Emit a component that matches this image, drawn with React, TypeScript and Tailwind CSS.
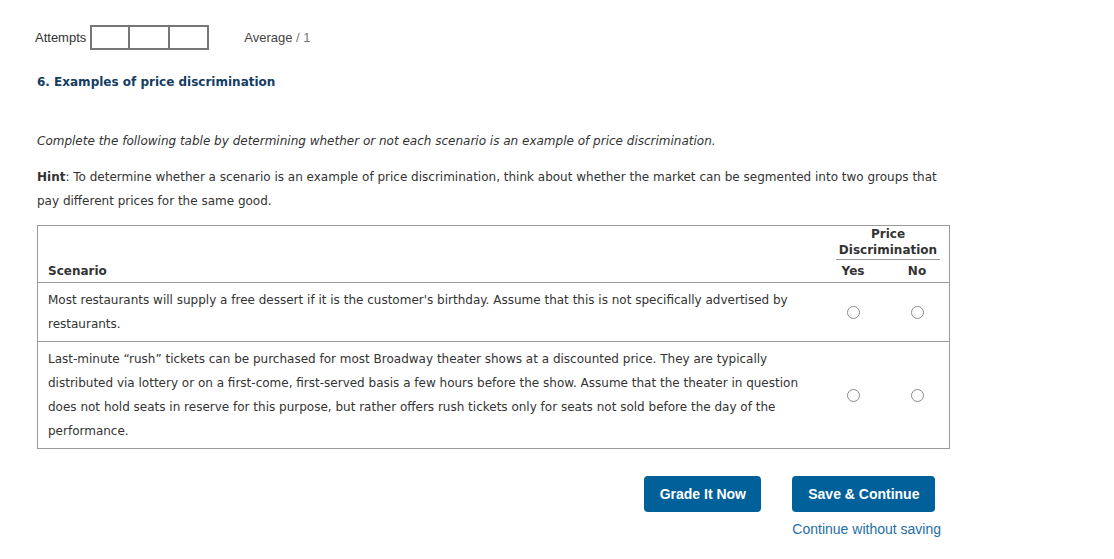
import React from 'react';

const rows = [
  {
    id: 1,
    text: "Most restaurants will supply a free dessert if it is the customer's birthday. Assume that this is not specifically advertised by restaurants.",
  },
  {
    id: 2,
    text: 'Last-minute \u201crush\u201d tickets can be purchased for most Broadway theater shows at a discounted price. They are typically distributed via lottery or on a first-come, first-served basis a few hours before the show. Assume that the theater in question does not hold seats in reserve for this purpose, but rather offers rush tickets only for seats not sold before the day of the performance.',
  },
];

const Radio: React.FC = () => (
  <span className="block w-[13px] h-[13px] rounded-full border border-[#8a8a8a] bg-white" />
);

const App: React.FC = () => {
  return (
    <div className="min-h-[559px] bg-white text-[#333] font-['DejaVu_Sans',Verdana,sans-serif]">
      {/* Attempts bar */}
      <div className="flex items-center pt-[25px] pl-[35px] font-['Liberation_Sans',Arial,sans-serif] text-[13px]">
        <span className="text-[#333] mr-[4px]">Attempts</span>
        <div className="flex">
          <div className="w-[40px] h-[25px] border-2 border-[#777]" />
          <div className="w-[40px] h-[25px] border-2 border-l-0 border-[#777]" />
          <div className="w-[39px] h-[25px] border-2 border-l-0 border-[#777]" />
        </div>
        <span className="ml-[35px] text-[#444]">
          Average <span className="text-[#777]">/ 1</span>
        </span>
      </div>

      <div className="pl-[37px]">
        <h2 className="mt-[24px] text-[12px] font-bold text-[#143d63] leading-[16px]">
          6. Examples of price discrimination
        </h2>

        <p className="mt-[39px] text-[12px] italic leading-[24px]">
          Complete the following table by determining whether or not each scenario is an example of price discrimination.
        </p>

        <p className="mt-[12px] text-[12px] leading-[24px] w-[913px]">
          <span className="font-bold">Hint</span>: To determine whether a scenario is an example of price discrimination, think about whether the market can be segmented into two groups that pay different prices for the same good.
        </p>

        {/* Table */}
        <div className="mt-[12px] w-[913px] border border-[#9a9a9a] text-[12px]">
          <div className="grid grid-cols-[1fr_64px_64px] border-b border-[#9a9a9a] h-[57px]">
            <div className="flex items-end pl-[10px] pb-[7px] font-bold leading-[16px]">Scenario</div>
            <div className="col-span-2 flex flex-col items-center justify-end pb-[7px] font-bold leading-[16px]">
              <div className="flex flex-col items-center w-[104px] border-b border-[#9a9a9a] pb-[1px] mb-[3px] ml-[6px]">
                <span>Price</span>
                <span>Discrimination</span>
              </div>
              <div className="grid grid-cols-2 w-full">
                <span className="text-center">Yes</span>
                <span className="text-center">No</span>
              </div>
            </div>
          </div>
          {rows.map((row, i) => (
            <div
              key={row.id}
              className={`grid grid-cols-[1fr_64px_64px] items-center ${i < rows.length - 1 ? 'border-b border-[#9a9a9a]' : ''}`}
            >
              <p className="pl-[10px] pr-[8px] py-[5px] leading-[24px]">{row.text}</p>
              <div className="flex justify-center">
                <Radio />
              </div>
              <div className="flex justify-center">
                <Radio />
              </div>
            </div>
          ))}
        </div>

        {/* Actions */}
        <div className="mt-[27px] w-[904px] flex justify-end items-start gap-[31px] font-['Liberation_Sans',Arial,sans-serif]">
          <button className="h-[36px] w-[117px] rounded-[4px] bg-[#00609a] text-white font-bold text-[14px]">
            Grade It Now
          </button>
          <div className="flex flex-col items-start">
            <button className="h-[36px] w-[143px] rounded-[4px] bg-[#00609a] text-white font-bold text-[14px]">
              Save &amp; Continue
            </button>
            <a className="mt-[8px] text-[14px] text-[#1f6fa3] leading-[18px]">Continue without saving</a>
          </div>
        </div>
      </div>
    </div>
  );
};

export default App;
